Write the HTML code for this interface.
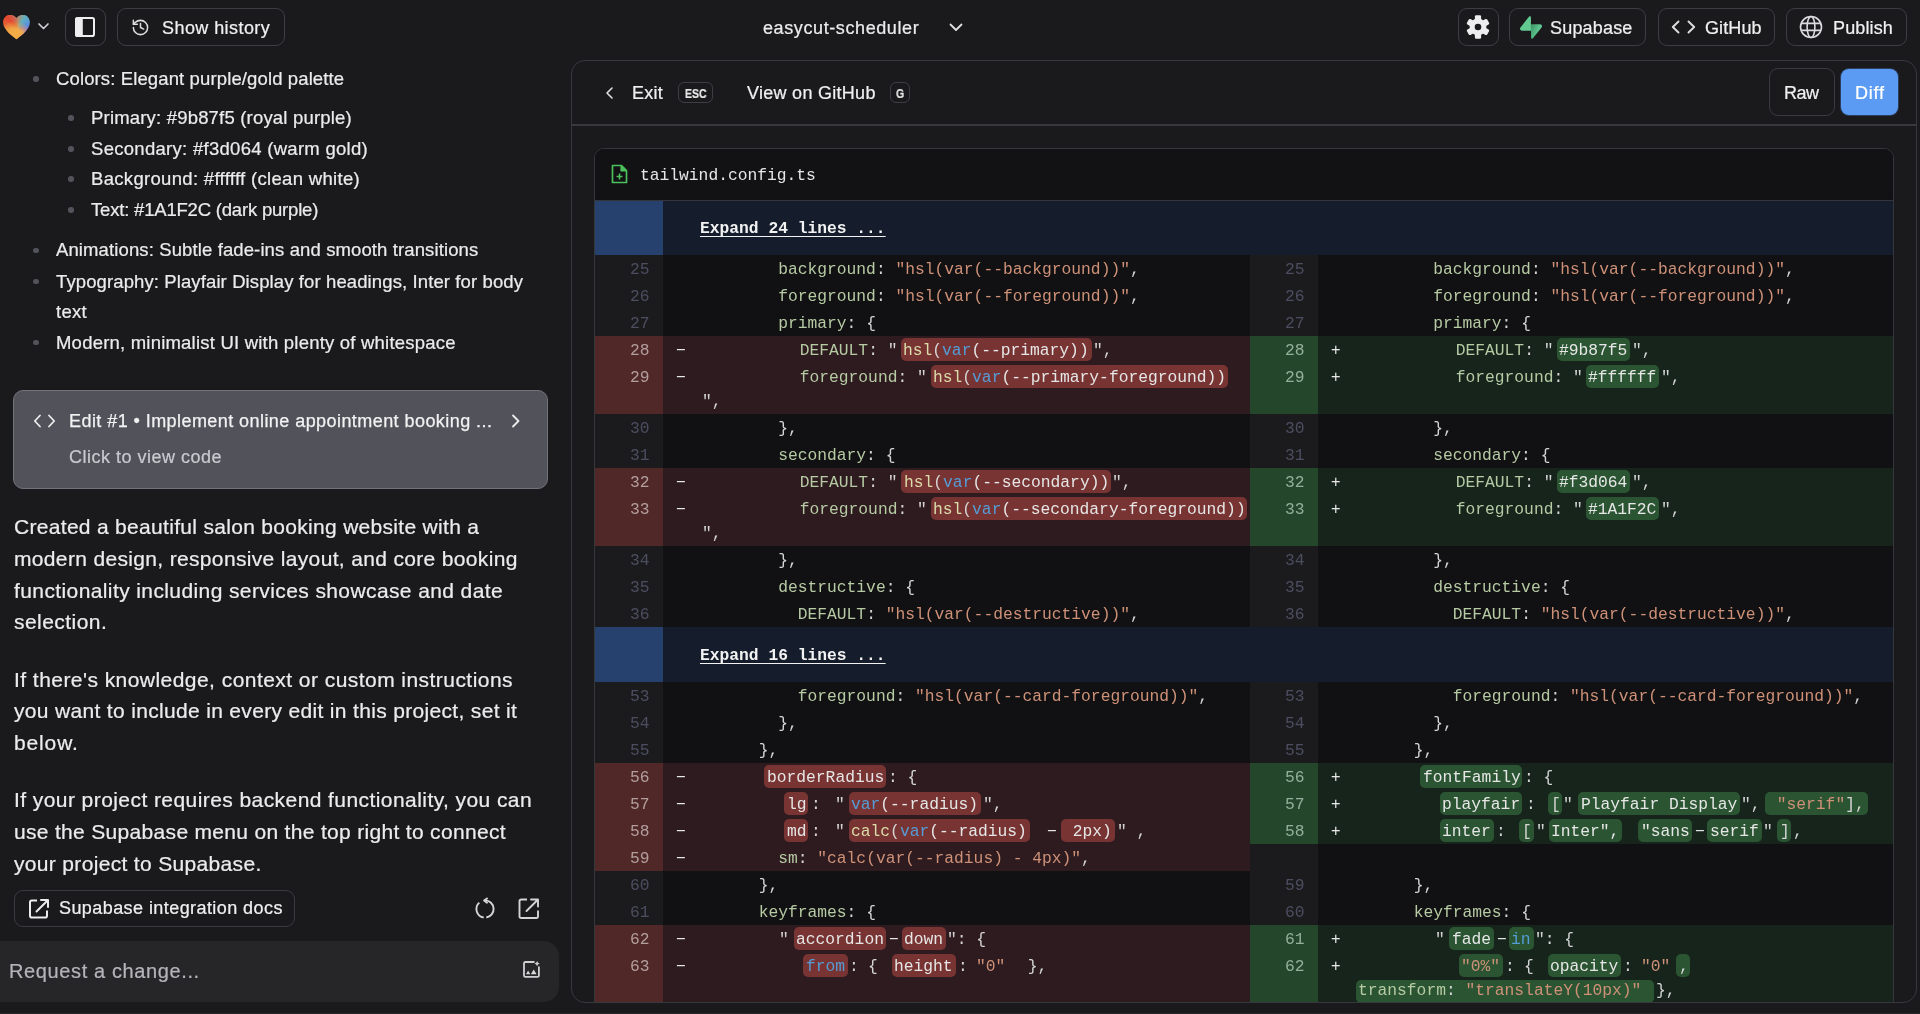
<!DOCTYPE html><html><head><meta charset="utf-8"><style>
html,body{margin:0;padding:0;width:1920px;height:1014px;overflow:hidden;background:#1a1a1d;}
.t{position:absolute;white-space:pre;will-change:transform;}
.r{position:absolute;}
svg{position:absolute;overflow:visible;}
</style></head><body>
<div class="r" style="left:2.5px;top:14.5px;width:28px;height:25px;clip-path:path('M14 24.8 C11.5 22.6 0.6 15.6 0.6 8 C0.6 3.6 3.7 0.3 7.6 0.3 C10.4 0.3 12.6 1.8 14 3.6 C15.4 1.8 17.6 0.3 20.4 0.3 C24.3 0.3 27.4 3.6 27.4 8 C27.4 15.6 16.5 22.6 14 24.8 Z');background:radial-gradient(ellipse 60% 55% at 42% 78%, rgba(241,172,70,1) 0%, rgba(241,172,70,0.85) 45%, rgba(241,172,70,0) 100%), conic-gradient(from 0deg at 52% 52%, #b98a6a 0deg, #5fb0c0 35deg, #5a92dc 70deg, #7c72e4 100deg, #d7a0a0 140deg, #f2ae48 180deg, #f0a244 225deg, #e8703a 270deg, #e4462f 315deg, #c8705a 350deg, #b98a6a 360deg);"></div>
<svg style="left:37.6px;top:23.2px" width="11" height="7" viewBox="0 0 11 7"><path d="M1 1 L5.5 5.5 L10 1" fill="none" stroke="#cfcfd3" stroke-width="1.7" stroke-linecap="round" stroke-linejoin="round"/></svg>
<div class="r" style="left:65px;top:8px;width:40.5px;height:38px;background:transparent;border:1.5px solid #3d3d43;border-radius:9px;box-sizing:border-box;"></div>
<svg style="left:75px;top:17px" width="20" height="20" viewBox="0 0 20 20"><rect x="1" y="1" width="18" height="18" rx="1.8" fill="none" stroke="#eeeef0" stroke-width="2"/><rect x="0.2" y="0.2" width="7.6" height="19.6" rx="1.5" fill="#eeeef0"/></svg>
<div class="r" style="left:116.5px;top:8px;width:168.5px;height:38px;background:transparent;border:1.5px solid #3d3d43;border-radius:9px;box-sizing:border-box;"></div>
<svg style="left:131px;top:17.5px" width="19" height="19" viewBox="0 0 24 24"><path d="M3 12a9 9 0 1 0 9-9 9.75 9.75 0 0 0-6.74 2.74L3 8" fill="none" stroke="#dedee0" stroke-width="1.9" stroke-linecap="round" stroke-linejoin="round"/><path d="M3 3v5h5" fill="none" stroke="#dedee0" stroke-width="1.9" stroke-linecap="round" stroke-linejoin="round"/><path d="M12 7v5l4 2" fill="none" stroke="#dedee0" stroke-width="1.9" stroke-linecap="round" stroke-linejoin="round"/></svg>
<div class="t" style="left:162.00px;top:15.06px;font:400 18px/27px 'Liberation Sans', sans-serif;color:#f0f0f0;letter-spacing:0.43px;-webkit-text-stroke:0.22px currentColor;">Show history</div>
<div class="t" style="left:762.50px;top:14.56px;font:400 18px/27px 'Liberation Sans', sans-serif;color:#ececec;letter-spacing:0.6px;-webkit-text-stroke:0.22px currentColor;">easycut-scheduler</div>
<svg style="left:949px;top:22.5px" width="14" height="9" viewBox="0 0 14 9"><path d="M1.5 1.5 L7 7 L12.5 1.5" fill="none" stroke="#e0e0e0" stroke-width="1.8" stroke-linecap="round" stroke-linejoin="round"/></svg>
<div class="r" style="left:1458px;top:8px;width:40.5px;height:38px;background:transparent;border:1.5px solid #3d3d43;border-radius:9px;box-sizing:border-box;"></div>
<svg style="left:1466px;top:15px" width="24" height="24" viewBox="-12 -12 24 24"><defs><mask id="gm"><g fill="#fff"><circle r="8.4"/><rect x="-3.1" y="-11.7" width="6.2" height="6" rx="1.3" transform="rotate(0)"/><rect x="-3.1" y="-11.7" width="6.2" height="6" rx="1.3" transform="rotate(60)"/><rect x="-3.1" y="-11.7" width="6.2" height="6" rx="1.3" transform="rotate(120)"/><rect x="-3.1" y="-11.7" width="6.2" height="6" rx="1.3" transform="rotate(180)"/><rect x="-3.1" y="-11.7" width="6.2" height="6" rx="1.3" transform="rotate(240)"/><rect x="-3.1" y="-11.7" width="6.2" height="6" rx="1.3" transform="rotate(300)"/></g><circle r="3.3" fill="#000"/></mask></defs><rect x="-12" y="-12" width="24" height="24" fill="#ededf0" mask="url(#gm)"/></svg>
<div class="r" style="left:1509px;top:8px;width:137px;height:38px;background:transparent;border:1.5px solid #3d3d43;border-radius:9px;box-sizing:border-box;"></div>
<svg style="left:1520px;top:16px" width="22" height="23" viewBox="0 0 109 113"><defs><linearGradient id="sb1" x1="53.97" y1="54.97" x2="94.16" y2="71.83" gradientUnits="userSpaceOnUse"><stop offset="0" stop-color="#3f9a68"/><stop offset="1" stop-color="#62c993"/></linearGradient></defs>
<path d="M63.7 110.3c-2.86 3.6-8.66 1.63-8.73-2.97l-1-67.3h45.22c8.19 0 12.76 9.46 7.67 15.88L63.7 110.3z" fill="url(#sb1)"/>
<path d="M45.32 2.07c2.86-3.6 8.66-1.63 8.73 2.97l.44 67.3H9.83c-8.19 0-12.76-9.46-7.67-15.88L45.32 2.07z" fill="#62ca90"/></svg>
<div class="t" style="left:1550.00px;top:15.06px;font:400 18px/27px 'Liberation Sans', sans-serif;color:#f0f0f0;letter-spacing:0.18px;-webkit-text-stroke:0.22px currentColor;">Supabase</div>
<div class="r" style="left:1657.5px;top:8px;width:117.0px;height:38px;background:transparent;border:1.5px solid #3d3d43;border-radius:9px;box-sizing:border-box;"></div>
<svg style="left:1670.8px;top:20.2px" width="25" height="14" viewBox="0 0 25 14"><path d="M7.5 1.5 L1.8 7 L7.5 12.5 M17.5 1.5 L23.2 7 L17.5 12.5" fill="none" stroke="#dedee1" stroke-width="1.9" stroke-linecap="round" stroke-linejoin="round"/></svg>
<div class="t" style="left:1704.50px;top:15.06px;font:400 18px/27px 'Liberation Sans', sans-serif;color:#f0f0f0;letter-spacing:0.12px;-webkit-text-stroke:0.22px currentColor;">GitHub</div>
<div class="r" style="left:1786px;top:8px;width:120.5px;height:38px;background:transparent;border:1.5px solid #3d3d43;border-radius:9px;box-sizing:border-box;"></div>
<svg style="left:1799.1px;top:15px" width="24" height="24" viewBox="0 0 24 24"><g fill="none" stroke="#dcdce0" stroke-width="1.6"><circle cx="12" cy="12" r="10.5"/><path d="M2.2 8.4 H21.8 M2.2 15.4 H21.8"/><ellipse cx="12" cy="12" rx="3.9" ry="10.5"/></g></svg>
<div class="t" style="left:1832.50px;top:15.06px;font:400 18px/27px 'Liberation Sans', sans-serif;color:#f0f0f0;letter-spacing:0.14px;-webkit-text-stroke:0.22px currentColor;">Publish</div>
<div class="r" style="left:33.2px;top:76.2px;width:5.6px;height:5.6px;border-radius:50%;background:#53535b"></div>
<div class="t" style="left:55.60px;top:64.99px;font:400 18.5px/28px 'Liberation Sans', sans-serif;color:#ebebeb;letter-spacing:0.125px;-webkit-text-stroke:0.22px currentColor;">Colors: Elegant purple/gold palette</div>
<div class="r" style="left:68.2px;top:115.4px;width:5.6px;height:5.6px;border-radius:50%;background:#53535b"></div>
<div class="t" style="left:90.90px;top:104.39px;font:400 18.5px/28px 'Liberation Sans', sans-serif;color:#ebebeb;letter-spacing:0.189px;-webkit-text-stroke:0.22px currentColor;">Primary: #9b87f5 (royal purple)</div>
<div class="r" style="left:68.2px;top:146.3px;width:5.6px;height:5.6px;border-radius:50%;background:#53535b"></div>
<div class="t" style="left:90.90px;top:135.29px;font:400 18.5px/28px 'Liberation Sans', sans-serif;color:#ebebeb;letter-spacing:0.288px;-webkit-text-stroke:0.22px currentColor;">Secondary: #f3d064 (warm gold)</div>
<div class="r" style="left:68.2px;top:176.3px;width:5.6px;height:5.6px;border-radius:50%;background:#53535b"></div>
<div class="t" style="left:90.90px;top:165.29px;font:400 18.5px/28px 'Liberation Sans', sans-serif;color:#ebebeb;letter-spacing:0.321px;-webkit-text-stroke:0.22px currentColor;">Background: #ffffff (clean white)</div>
<div class="r" style="left:68.2px;top:207.3px;width:5.6px;height:5.6px;border-radius:50%;background:#53535b"></div>
<div class="t" style="left:90.90px;top:196.29px;font:400 18.5px/28px 'Liberation Sans', sans-serif;color:#ebebeb;letter-spacing:-0.193px;-webkit-text-stroke:0.22px currentColor;">Text: #1A1F2C (dark purple)</div>
<div class="r" style="left:33.2px;top:247.5px;width:5.6px;height:5.6px;border-radius:50%;background:#53535b"></div>
<div class="t" style="left:55.70px;top:236.49px;font:400 18.5px/28px 'Liberation Sans', sans-serif;color:#ebebeb;letter-spacing:0.118px;-webkit-text-stroke:0.22px currentColor;">Animations: Subtle fade-ins and smooth transitions</div>
<div class="r" style="left:33.2px;top:278.6px;width:5.6px;height:5.6px;border-radius:50%;background:#53535b"></div>
<div class="t" style="left:55.70px;top:267.59px;font:400 18.5px/28px 'Liberation Sans', sans-serif;color:#ebebeb;letter-spacing:0.112px;-webkit-text-stroke:0.22px currentColor;">Typography: Playfair Display for headings, Inter for body</div>
<div class="t" style="left:55.70px;top:297.79px;font:400 18.5px/28px 'Liberation Sans', sans-serif;color:#ebebeb;letter-spacing:0.240px;-webkit-text-stroke:0.22px currentColor;">text</div>
<div class="r" style="left:33.2px;top:339.7px;width:5.6px;height:5.6px;border-radius:50%;background:#53535b"></div>
<div class="t" style="left:55.70px;top:328.69px;font:400 18.5px/28px 'Liberation Sans', sans-serif;color:#ebebeb;letter-spacing:0.213px;-webkit-text-stroke:0.22px currentColor;">Modern, minimalist UI with plenty of whitespace</div>
<div class="r" style="left:13px;top:389.5px;width:535px;height:99.80000000000001px;background:#52525b;border:1.5px solid #72727a;border-radius:10px;box-sizing:border-box;"></div>
<svg style="left:33px;top:413.5px" width="23" height="14" viewBox="0 0 23 14"><path d="M7 1.5 L1.8 7 L7 12.5 M16 1.5 L21.2 7 L16 12.5" fill="none" stroke="#ececec" stroke-width="1.8" stroke-linecap="round" stroke-linejoin="round"/></svg>
<div class="t" style="left:69.10px;top:408.36px;font:400 18px/27px 'Liberation Sans', sans-serif;color:#f2f2f2;letter-spacing:0.436px;-webkit-text-stroke:0.25px #f2f2f2;">Edit #1 • Implement online appointment booking ...</div>
<svg style="left:511px;top:413.5px" width="10" height="14" viewBox="0 0 10 14"><path d="M2 1.5 L7.5 7 L2 12.5" fill="none" stroke="#ececec" stroke-width="1.8" stroke-linecap="round" stroke-linejoin="round"/></svg>
<div class="t" style="left:69.10px;top:443.86px;font:400 18px/27px 'Liberation Sans', sans-serif;color:#c9c9ce;letter-spacing:0.498px;-webkit-text-stroke:0.22px currentColor;">Click to view code</div>
<div class="t" style="left:14.00px;top:511.02px;font:400 21px/32px 'Liberation Sans', sans-serif;color:#ececec;letter-spacing:0.306px;-webkit-text-stroke:0.22px currentColor;">Created a beautiful salon booking website with a</div>
<div class="t" style="left:14.00px;top:543.12px;font:400 21px/32px 'Liberation Sans', sans-serif;color:#ececec;letter-spacing:0.338px;-webkit-text-stroke:0.22px currentColor;">modern design, responsive layout, and core booking</div>
<div class="t" style="left:14.00px;top:574.62px;font:400 21px/32px 'Liberation Sans', sans-serif;color:#ececec;letter-spacing:0.396px;-webkit-text-stroke:0.22px currentColor;">functionality including services showcase and date</div>
<div class="t" style="left:14.00px;top:605.82px;font:400 21px/32px 'Liberation Sans', sans-serif;color:#ececec;letter-spacing:0.458px;-webkit-text-stroke:0.22px currentColor;">selection.</div>
<div class="t" style="left:14.00px;top:663.52px;font:400 21px/32px 'Liberation Sans', sans-serif;color:#ececec;letter-spacing:0.450px;-webkit-text-stroke:0.22px currentColor;">If there's knowledge, context or custom instructions</div>
<div class="t" style="left:14.00px;top:694.72px;font:400 21px/32px 'Liberation Sans', sans-serif;color:#ececec;letter-spacing:0.329px;-webkit-text-stroke:0.22px currentColor;">you want to include in every edit in this project, set it</div>
<div class="t" style="left:14.00px;top:726.52px;font:400 21px/32px 'Liberation Sans', sans-serif;color:#ececec;letter-spacing:0.858px;-webkit-text-stroke:0.22px currentColor;">below.</div>
<div class="t" style="left:14.00px;top:784.42px;font:400 21px/32px 'Liberation Sans', sans-serif;color:#ececec;letter-spacing:0.428px;-webkit-text-stroke:0.22px currentColor;">If your project requires backend functionality, you can</div>
<div class="t" style="left:14.00px;top:815.62px;font:400 21px/32px 'Liberation Sans', sans-serif;color:#ececec;letter-spacing:0.317px;-webkit-text-stroke:0.22px currentColor;">use the Supabase menu on the top right to connect</div>
<div class="t" style="left:14.00px;top:847.52px;font:400 21px/32px 'Liberation Sans', sans-serif;color:#ececec;letter-spacing:0.330px;-webkit-text-stroke:0.22px currentColor;">your project to Supabase.</div>
<div class="r" style="left:14px;top:889.5px;width:280.5px;height:37.0px;background:transparent;border:1px solid #3a3b40;border-radius:9px;box-sizing:border-box;"></div>
<svg style="left:28px;top:897.5px" width="22" height="22" viewBox="0 0 22 22"><path d="M9 2.5 H3.8 Q2 2.5 2 4.3 V17.7 Q2 19.5 3.8 19.5 H17.2 Q19 19.5 19 17.7 V12.5" fill="none" stroke="#ececec" stroke-width="2" stroke-linejoin="round"/><path d="M13 2 H20 V9 M20 2 L8.5 13.5" fill="none" stroke="#ececec" stroke-width="2" stroke-linecap="round" stroke-linejoin="round"/></svg>
<div class="t" style="left:58.60px;top:894.66px;font:400 18px/27px 'Liberation Sans', sans-serif;color:#f0f0f0;letter-spacing:0.427px;-webkit-text-stroke:0.22px currentColor;">Supabase integration docs</div>
<svg style="left:475.3px;top:899px" width="20" height="20" viewBox="0 0 20 20"><path d="M10.2 1.4 A8.6 8.6 0 0 1 11.3 18.5 M8.7 18.5 A8.6 8.6 0 0 1 4.3 3.6" fill="none" stroke="#d6d6d8" stroke-width="1.9" stroke-linecap="butt"/><path d="M12 -0.6 L9.1 1.6 L12 3.8" fill="none" stroke="#d6d6d8" stroke-width="1.9" stroke-linecap="round" stroke-linejoin="round"/></svg>
<svg style="left:518px;top:897.7px" width="22" height="22" viewBox="0 0 22 22"><path d="M9 1.5 H3.3 Q1.5 1.5 1.5 3.3 V18.2 Q1.5 20 3.3 20 H18.2 Q20 20 20 18.2 V12.5" fill="none" stroke="#d4d4d4" stroke-width="1.9" stroke-linejoin="round"/><path d="M13 1.5 H20 V8.5 M20 1.5 L8.5 13" fill="none" stroke="#d4d4d4" stroke-width="1.9" stroke-linecap="round" stroke-linejoin="round"/></svg>
<div class="r" style="left:-20px;top:941px;width:578.5px;height:61px;background:#262629;border-radius:15px;box-sizing:border-box;"></div>
<div class="t" style="left:9.00px;top:954.87px;font:400 20px/32px 'Liberation Sans', sans-serif;color:#b4b4b9;letter-spacing:0.619px;-webkit-text-stroke:0.22px currentColor;">Request a change...</div>
<svg style="left:522px;top:960px" width="19" height="19" viewBox="0 0 19 19"><path d="M11.9 2 H3.4 Q2 2 2 3.4 V15.4 Q2 16.8 3.4 16.8 H15.5 Q16.9 16.8 16.9 15.4 V7.2" fill="none" stroke="#d0d0d3" stroke-width="1.8" stroke-linecap="round"/><path d="M4 14.2 L6.1 10.5 L8.2 14.2 Z M8.8 14.2 L11.7 9.4 L14.6 14.2 Z" fill="#d8d8da"/><path d="M15.1 1 Q15.6 3.1 17.7 3.6 Q15.6 4.1 15.1 6.2 Q14.6 4.1 12.5 3.6 Q14.6 3.1 15.1 1 Z" fill="#d0d0d3"/></svg>
<div class="r" style="left:0px;top:1012.6px;width:1920px;height:1.3999999999999773px;background:#27272a;border-radius:0px;box-sizing:border-box;"></div>
<div class="r" style="left:570.5px;top:59.5px;width:1346.5px;height:943.3px;border:1.5px solid #38393e;border-radius:14px;box-sizing:border-box;background:#1a1a1d;overflow:hidden;" id="panel">
<div class="r" style="left:-1px;top:63.5px;width:1346px;height:1.5px;background:#38393e;border-radius:0px;box-sizing:border-box;"></div>
<svg style="left:33px;top:26px" width="9" height="12" viewBox="0 0 9 12"><path d="M7 1 L2 6 L7 11" fill="none" stroke="#e0e0e0" stroke-width="1.6" stroke-linecap="round" stroke-linejoin="round"/></svg>
<div class="t" style="left:60.00px;top:19.36px;font:400 18px/27px 'Liberation Sans', sans-serif;color:#f0f0f0;letter-spacing:0.232px;-webkit-text-stroke:0.22px currentColor;">Exit</div>
<div class="r" style="left:106.5px;top:21.5px;width:35.0px;height:20.5px;background:transparent;border:1.5px solid #3d3e44;border-radius:6px;box-sizing:border-box;"></div>
<div class="t" style="left:113.30px;top:24.13px;font:700 13.2px/17px 'Liberation Sans', sans-serif;color:#e8e8e8;letter-spacing:0px;transform:scaleX(0.8);transform-origin:0 0;-webkit-text-stroke:0.22px currentColor;">ESC</div>
<div class="t" style="left:175.20px;top:19.36px;font:400 18px/27px 'Liberation Sans', sans-serif;color:#f0f0f0;letter-spacing:0.283px;-webkit-text-stroke:0.22px currentColor;">View on GitHub</div>
<div class="r" style="left:318px;top:21.5px;width:20.5px;height:20.5px;background:transparent;border:1.5px solid #3d3e44;border-radius:6px;box-sizing:border-box;"></div>
<div class="t" style="left:324.80px;top:24.13px;font:700 13.2px/17px 'Liberation Sans', sans-serif;color:#e8e8e8;letter-spacing:0px;transform:scaleX(0.8);transform-origin:0 0;-webkit-text-stroke:0.22px currentColor;">G</div>
<div class="r" style="left:1197.5px;top:7.5px;width:65.5px;height:48.0px;background:transparent;border:1.5px solid #3a3b40;border-radius:9px;box-sizing:border-box;"></div>
<div class="t" style="left:1212.50px;top:19.36px;font:400 18px/27px 'Liberation Sans', sans-serif;color:#f0f0f0;letter-spacing:-0.505px;-webkit-text-stroke:0.22px currentColor;">Raw</div>
<div class="r" style="left:1269.5px;top:8.5px;width:57.0px;height:46.0px;background:#5b9bf3;border-radius:8px;box-sizing:border-box;box-shadow:0 0 0 1px #2b3f5c;"></div>
<div class="t" style="left:1283.70px;top:19.36px;font:400 18px/27px 'Liberation Sans', sans-serif;color:#ffffff;letter-spacing:0.742px;-webkit-text-stroke:0.22px currentColor;">Diff</div>
<div class="r" style="left:22px;top:87px;width:1300.5px;height:952px;background:#111113;border:1.5px solid #36373d;border-radius:10px;box-sizing:border-box;"></div>
<div class="r" style="left:23px;top:88px;width:1298px;height:51px;background:#121214;border-radius:9px;box-sizing:border-box;"></div>
<div class="r" style="left:23px;top:139px;width:1298px;height:1px;background:#33343c;border-radius:0px;box-sizing:border-box;"></div>
<svg style="left:39px;top:103.5px" width="17" height="20" viewBox="0 0 17 20"><path d="M1.5 1.5 H10.5 L15.5 6.5 V18.5 H1.5 Z" fill="none" stroke="#4cc05c" stroke-width="1.7" stroke-linejoin="round"/><path d="M10 1.5 V7 H15.5" fill="#4cc05c" stroke="#4cc05c" stroke-width="1.2" stroke-linejoin="round"/><path d="M8.5 9.5 V15.5 M5.5 12.5 H11.5" stroke="#4cc05c" stroke-width="1.6"/></svg>
<div class="t" style="left:68.50px;top:101.16px;font:400 16.3px/27px 'Liberation Mono', monospace;color:#e6e6e6;letter-spacing:0px;">tailwind.config.ts</div>
<div class="r" style="left:23px;top:140px;width:68px;height:54px;background:#27416f;border-radius:0px;box-sizing:border-box;"></div>
<div class="r" style="left:91px;top:140px;width:1230px;height:54px;background:#151c2c;border-radius:0px;box-sizing:border-box;"></div>
<div class="t" style="left:128.00px;top:154.66px;font:700 16.3px/27px 'Liberation Mono', monospace;color:#f2f2f2;letter-spacing:0px;text-decoration:underline;text-underline-offset:2.5px;text-decoration-thickness:1.2px;">Expand 24 lines ...</div>
<div class="r" style="left:23px;top:194px;width:68px;height:27px;background:#1b1b1e;border-radius:0px;box-sizing:border-box;"></div>
<div class="r" style="left:91px;top:194px;width:587px;height:27px;background:#111113;border-radius:0px;box-sizing:border-box;"></div>
<div class="t" style="left:58.04px;top:195.56px;font:400 16.3px/27px 'Liberation Mono', monospace;color:#d4d4d4;letter-spacing:0px;"><span style="color:#4c4d5f">25</span></div>
<div class="t" style="left:128.00px;top:195.56px;font:400 16.3px/27px 'Liberation Mono', monospace;color:#d4d4d4;letter-spacing:0px;">        <span style="color:#b6caa3">background</span><span style="color:#d4d4d4">:</span> <span style="color:#ce9178">"hsl(var(--background))"</span><span style="color:#d4d4d4">,</span></div>
<div class="r" style="left:678px;top:194px;width:68px;height:27px;background:#1b1b1e;border-radius:0px;box-sizing:border-box;"></div>
<div class="r" style="left:746px;top:194px;width:575px;height:27px;background:#111113;border-radius:0px;box-sizing:border-box;"></div>
<div class="t" style="left:713.04px;top:195.56px;font:400 16.3px/27px 'Liberation Mono', monospace;color:#d4d4d4;letter-spacing:0px;"><span style="color:#4c4d5f">25</span></div>
<div class="t" style="left:783.50px;top:195.56px;font:400 16.3px/27px 'Liberation Mono', monospace;color:#d4d4d4;letter-spacing:0px;">        <span style="color:#b6caa3">background</span><span style="color:#d4d4d4">:</span> <span style="color:#ce9178">"hsl(var(--background))"</span><span style="color:#d4d4d4">,</span></div>
<div class="r" style="left:23px;top:221px;width:68px;height:27px;background:#1b1b1e;border-radius:0px;box-sizing:border-box;"></div>
<div class="r" style="left:91px;top:221px;width:587px;height:27px;background:#111113;border-radius:0px;box-sizing:border-box;"></div>
<div class="t" style="left:58.04px;top:222.56px;font:400 16.3px/27px 'Liberation Mono', monospace;color:#d4d4d4;letter-spacing:0px;"><span style="color:#4c4d5f">26</span></div>
<div class="t" style="left:128.00px;top:222.56px;font:400 16.3px/27px 'Liberation Mono', monospace;color:#d4d4d4;letter-spacing:0px;">        <span style="color:#b6caa3">foreground</span><span style="color:#d4d4d4">:</span> <span style="color:#ce9178">"hsl(var(--foreground))"</span><span style="color:#d4d4d4">,</span></div>
<div class="r" style="left:678px;top:221px;width:68px;height:27px;background:#1b1b1e;border-radius:0px;box-sizing:border-box;"></div>
<div class="r" style="left:746px;top:221px;width:575px;height:27px;background:#111113;border-radius:0px;box-sizing:border-box;"></div>
<div class="t" style="left:713.04px;top:222.56px;font:400 16.3px/27px 'Liberation Mono', monospace;color:#d4d4d4;letter-spacing:0px;"><span style="color:#4c4d5f">26</span></div>
<div class="t" style="left:783.50px;top:222.56px;font:400 16.3px/27px 'Liberation Mono', monospace;color:#d4d4d4;letter-spacing:0px;">        <span style="color:#b6caa3">foreground</span><span style="color:#d4d4d4">:</span> <span style="color:#ce9178">"hsl(var(--foreground))"</span><span style="color:#d4d4d4">,</span></div>
<div class="r" style="left:23px;top:248px;width:68px;height:27px;background:#1b1b1e;border-radius:0px;box-sizing:border-box;"></div>
<div class="r" style="left:91px;top:248px;width:587px;height:27px;background:#111113;border-radius:0px;box-sizing:border-box;"></div>
<div class="t" style="left:58.04px;top:249.56px;font:400 16.3px/27px 'Liberation Mono', monospace;color:#d4d4d4;letter-spacing:0px;"><span style="color:#4c4d5f">27</span></div>
<div class="t" style="left:128.00px;top:249.56px;font:400 16.3px/27px 'Liberation Mono', monospace;color:#d4d4d4;letter-spacing:0px;">        <span style="color:#b6caa3">primary</span><span style="color:#d4d4d4">:</span> <span style="color:#d4d4d4">{</span></div>
<div class="r" style="left:678px;top:248px;width:68px;height:27px;background:#1b1b1e;border-radius:0px;box-sizing:border-box;"></div>
<div class="r" style="left:746px;top:248px;width:575px;height:27px;background:#111113;border-radius:0px;box-sizing:border-box;"></div>
<div class="t" style="left:713.04px;top:249.56px;font:400 16.3px/27px 'Liberation Mono', monospace;color:#d4d4d4;letter-spacing:0px;"><span style="color:#4c4d5f">27</span></div>
<div class="t" style="left:783.50px;top:249.56px;font:400 16.3px/27px 'Liberation Mono', monospace;color:#d4d4d4;letter-spacing:0px;">        <span style="color:#b6caa3">primary</span><span style="color:#d4d4d4">:</span> <span style="color:#d4d4d4">{</span></div>
<div class="r" style="left:23px;top:275px;width:68px;height:27px;background:#512828;border-radius:0px;box-sizing:border-box;"></div>
<div class="r" style="left:91px;top:275px;width:587px;height:27px;background:#2e1b1f;border-radius:0px;box-sizing:border-box;"></div>
<div class="t" style="left:58.04px;top:276.56px;font:400 16.3px/27px 'Liberation Mono', monospace;color:#d4d4d4;letter-spacing:0px;"><span style="color:#b39e9e">28</span></div>
<div class="t" style="left:104.00px;top:275.36px;font:400 16.3px/27px 'Liberation Mono', monospace;color:#d4d4d4;letter-spacing:0px;"><span style="color:#e8e8e8;font-family:'Liberation Sans'">−</span></div>
<div class="r" style="left:678px;top:275px;width:68px;height:27px;background:#24472c;border-radius:0px;box-sizing:border-box;"></div>
<div class="r" style="left:746px;top:275px;width:575px;height:27px;background:#16241c;border-radius:0px;box-sizing:border-box;"></div>
<div class="t" style="left:713.04px;top:276.56px;font:400 16.3px/27px 'Liberation Mono', monospace;color:#d4d4d4;letter-spacing:0px;"><span style="color:#94b09a">28</span></div>
<div class="t" style="left:759.80px;top:275.36px;font:400 16.3px/27px 'Liberation Mono', monospace;color:#d4d4d4;letter-spacing:0px;"><span style="color:#e8e8e8;font-family:'Liberation Sans'">+</span></div>
<div class="r" style="left:23px;top:302px;width:68px;height:51px;background:#512828;border-radius:0px;box-sizing:border-box;"></div>
<div class="r" style="left:91px;top:302px;width:587px;height:51px;background:#2e1b1f;border-radius:0px;box-sizing:border-box;"></div>
<div class="t" style="left:58.04px;top:303.56px;font:400 16.3px/27px 'Liberation Mono', monospace;color:#d4d4d4;letter-spacing:0px;"><span style="color:#b39e9e">29</span></div>
<div class="t" style="left:104.00px;top:302.36px;font:400 16.3px/27px 'Liberation Mono', monospace;color:#d4d4d4;letter-spacing:0px;"><span style="color:#e8e8e8;font-family:'Liberation Sans'">−</span></div>
<div class="r" style="left:678px;top:302px;width:68px;height:51px;background:#24472c;border-radius:0px;box-sizing:border-box;"></div>
<div class="r" style="left:746px;top:302px;width:575px;height:51px;background:#16241c;border-radius:0px;box-sizing:border-box;"></div>
<div class="t" style="left:713.04px;top:303.56px;font:400 16.3px/27px 'Liberation Mono', monospace;color:#d4d4d4;letter-spacing:0px;"><span style="color:#94b09a">29</span></div>
<div class="t" style="left:759.80px;top:302.36px;font:400 16.3px/27px 'Liberation Mono', monospace;color:#d4d4d4;letter-spacing:0px;"><span style="color:#e8e8e8;font-family:'Liberation Sans'">+</span></div>
<div class="t" style="left:130.50px;top:276.56px;font:400 16.3px/27px 'Liberation Mono', monospace;color:#d4d4d4;letter-spacing:0px;"><span style="color:#d4d4d4">          <span style="color:#b6caa3">DEFAULT</span><span style="color:#d4d4d4">: "</span></span></div>
<div class="r" style="left:329px;top:277px;width:191.5px;height:23.5px;background:#773433;border-radius:5px;box-sizing:border-box;"></div>
<div class="t" style="left:331.50px;top:276.56px;font:400 16.3px/27px 'Liberation Mono', monospace;color:#d4d4d4;letter-spacing:0px;"><span style="color:#d4d4d4"><span style="color:#dcdcaa">hsl</span><span style="color:#d4d4d4">(</span><span style="color:#569cd6">var</span><span style="color:#e6e6e6">(--primary))</span></span></div>
<div class="t" style="left:521.50px;top:276.56px;font:400 16.3px/27px 'Liberation Mono', monospace;color:#d4d4d4;letter-spacing:0px;"><span style="color:#d4d4d4"><span style="color:#d4d4d4">",</span></span></div>
<div class="t" style="left:130.50px;top:303.56px;font:400 16.3px/27px 'Liberation Mono', monospace;color:#d4d4d4;letter-spacing:0px;"><span style="color:#d4d4d4">          <span style="color:#b6caa3">foreground</span><span style="color:#d4d4d4">: "</span></span></div>
<div class="r" style="left:359px;top:304px;width:297.5px;height:23.5px;background:#773433;border-radius:5px;box-sizing:border-box;"></div>
<div class="t" style="left:361.50px;top:303.56px;font:400 16.3px/27px 'Liberation Mono', monospace;color:#d4d4d4;letter-spacing:0px;"><span style="color:#d4d4d4"><span style="color:#dcdcaa">hsl</span><span style="color:#d4d4d4">(</span><span style="color:#569cd6">var</span><span style="color:#e6e6e6">(--primary-foreground))</span></span></div>
<div class="t" style="left:130.50px;top:327.56px;font:400 16.3px/27px 'Liberation Mono', monospace;color:#d4d4d4;letter-spacing:0px;"><span style="color:#d4d4d4"><span style="color:#d4d4d4">",</span></span></div>
<div class="t" style="left:786.00px;top:276.56px;font:400 16.3px/27px 'Liberation Mono', monospace;color:#d4d4d4;letter-spacing:0px;"><span style="color:#d4d4d4">          <span style="color:#b6caa3">DEFAULT</span><span style="color:#d4d4d4">: "</span></span></div>
<div class="r" style="left:985px;top:277px;width:73.5px;height:23.5px;background:#2b5532;border-radius:5px;box-sizing:border-box;"></div>
<div class="t" style="left:987.50px;top:276.56px;font:400 16.3px/27px 'Liberation Mono', monospace;color:#d4d4d4;letter-spacing:0px;"><span style="color:#d4d4d4"><span style="color:#e6e6e6">#9b87f5</span></span></div>
<div class="t" style="left:1060.00px;top:276.56px;font:400 16.3px/27px 'Liberation Mono', monospace;color:#d4d4d4;letter-spacing:0px;"><span style="color:#d4d4d4"><span style="color:#d4d4d4">",</span></span></div>
<div class="t" style="left:786.00px;top:303.56px;font:400 16.3px/27px 'Liberation Mono', monospace;color:#d4d4d4;letter-spacing:0px;"><span style="color:#d4d4d4">          <span style="color:#b6caa3">foreground</span><span style="color:#d4d4d4">: "</span></span></div>
<div class="r" style="left:1014px;top:304px;width:73.5px;height:23.5px;background:#2b5532;border-radius:5px;box-sizing:border-box;"></div>
<div class="t" style="left:1016.50px;top:303.56px;font:400 16.3px/27px 'Liberation Mono', monospace;color:#d4d4d4;letter-spacing:0px;"><span style="color:#d4d4d4"><span style="color:#e6e6e6">#ffffff</span></span></div>
<div class="t" style="left:1089.00px;top:303.56px;font:400 16.3px/27px 'Liberation Mono', monospace;color:#d4d4d4;letter-spacing:0px;"><span style="color:#d4d4d4"><span style="color:#d4d4d4">",</span></span></div>
<div class="r" style="left:23px;top:353px;width:68px;height:27px;background:#1b1b1e;border-radius:0px;box-sizing:border-box;"></div>
<div class="r" style="left:91px;top:353px;width:587px;height:27px;background:#111113;border-radius:0px;box-sizing:border-box;"></div>
<div class="t" style="left:58.04px;top:354.56px;font:400 16.3px/27px 'Liberation Mono', monospace;color:#d4d4d4;letter-spacing:0px;"><span style="color:#4c4d5f">30</span></div>
<div class="t" style="left:128.00px;top:354.56px;font:400 16.3px/27px 'Liberation Mono', monospace;color:#d4d4d4;letter-spacing:0px;">        <span style="color:#d4d4d4">}</span><span style="color:#d4d4d4">,</span></div>
<div class="r" style="left:678px;top:353px;width:68px;height:27px;background:#1b1b1e;border-radius:0px;box-sizing:border-box;"></div>
<div class="r" style="left:746px;top:353px;width:575px;height:27px;background:#111113;border-radius:0px;box-sizing:border-box;"></div>
<div class="t" style="left:713.04px;top:354.56px;font:400 16.3px/27px 'Liberation Mono', monospace;color:#d4d4d4;letter-spacing:0px;"><span style="color:#4c4d5f">30</span></div>
<div class="t" style="left:783.50px;top:354.56px;font:400 16.3px/27px 'Liberation Mono', monospace;color:#d4d4d4;letter-spacing:0px;">        <span style="color:#d4d4d4">}</span><span style="color:#d4d4d4">,</span></div>
<div class="r" style="left:23px;top:380px;width:68px;height:27px;background:#1b1b1e;border-radius:0px;box-sizing:border-box;"></div>
<div class="r" style="left:91px;top:380px;width:587px;height:27px;background:#111113;border-radius:0px;box-sizing:border-box;"></div>
<div class="t" style="left:58.04px;top:381.56px;font:400 16.3px/27px 'Liberation Mono', monospace;color:#d4d4d4;letter-spacing:0px;"><span style="color:#4c4d5f">31</span></div>
<div class="t" style="left:128.00px;top:381.56px;font:400 16.3px/27px 'Liberation Mono', monospace;color:#d4d4d4;letter-spacing:0px;">        <span style="color:#b6caa3">secondary</span><span style="color:#d4d4d4">:</span> <span style="color:#d4d4d4">{</span></div>
<div class="r" style="left:678px;top:380px;width:68px;height:27px;background:#1b1b1e;border-radius:0px;box-sizing:border-box;"></div>
<div class="r" style="left:746px;top:380px;width:575px;height:27px;background:#111113;border-radius:0px;box-sizing:border-box;"></div>
<div class="t" style="left:713.04px;top:381.56px;font:400 16.3px/27px 'Liberation Mono', monospace;color:#d4d4d4;letter-spacing:0px;"><span style="color:#4c4d5f">31</span></div>
<div class="t" style="left:783.50px;top:381.56px;font:400 16.3px/27px 'Liberation Mono', monospace;color:#d4d4d4;letter-spacing:0px;">        <span style="color:#b6caa3">secondary</span><span style="color:#d4d4d4">:</span> <span style="color:#d4d4d4">{</span></div>
<div class="r" style="left:23px;top:407px;width:68px;height:27px;background:#512828;border-radius:0px;box-sizing:border-box;"></div>
<div class="r" style="left:91px;top:407px;width:587px;height:27px;background:#2e1b1f;border-radius:0px;box-sizing:border-box;"></div>
<div class="t" style="left:58.04px;top:408.56px;font:400 16.3px/27px 'Liberation Mono', monospace;color:#d4d4d4;letter-spacing:0px;"><span style="color:#b39e9e">32</span></div>
<div class="t" style="left:104.00px;top:407.36px;font:400 16.3px/27px 'Liberation Mono', monospace;color:#d4d4d4;letter-spacing:0px;"><span style="color:#e8e8e8;font-family:'Liberation Sans'">−</span></div>
<div class="r" style="left:678px;top:407px;width:68px;height:27px;background:#24472c;border-radius:0px;box-sizing:border-box;"></div>
<div class="r" style="left:746px;top:407px;width:575px;height:27px;background:#16241c;border-radius:0px;box-sizing:border-box;"></div>
<div class="t" style="left:713.04px;top:408.56px;font:400 16.3px/27px 'Liberation Mono', monospace;color:#d4d4d4;letter-spacing:0px;"><span style="color:#94b09a">32</span></div>
<div class="t" style="left:759.80px;top:407.36px;font:400 16.3px/27px 'Liberation Mono', monospace;color:#d4d4d4;letter-spacing:0px;"><span style="color:#e8e8e8;font-family:'Liberation Sans'">+</span></div>
<div class="r" style="left:23px;top:434px;width:68px;height:51px;background:#512828;border-radius:0px;box-sizing:border-box;"></div>
<div class="r" style="left:91px;top:434px;width:587px;height:51px;background:#2e1b1f;border-radius:0px;box-sizing:border-box;"></div>
<div class="t" style="left:58.04px;top:435.56px;font:400 16.3px/27px 'Liberation Mono', monospace;color:#d4d4d4;letter-spacing:0px;"><span style="color:#b39e9e">33</span></div>
<div class="t" style="left:104.00px;top:434.36px;font:400 16.3px/27px 'Liberation Mono', monospace;color:#d4d4d4;letter-spacing:0px;"><span style="color:#e8e8e8;font-family:'Liberation Sans'">−</span></div>
<div class="r" style="left:678px;top:434px;width:68px;height:51px;background:#24472c;border-radius:0px;box-sizing:border-box;"></div>
<div class="r" style="left:746px;top:434px;width:575px;height:51px;background:#16241c;border-radius:0px;box-sizing:border-box;"></div>
<div class="t" style="left:713.04px;top:435.56px;font:400 16.3px/27px 'Liberation Mono', monospace;color:#d4d4d4;letter-spacing:0px;"><span style="color:#94b09a">33</span></div>
<div class="t" style="left:759.80px;top:434.36px;font:400 16.3px/27px 'Liberation Mono', monospace;color:#d4d4d4;letter-spacing:0px;"><span style="color:#e8e8e8;font-family:'Liberation Sans'">+</span></div>
<div class="t" style="left:130.50px;top:408.56px;font:400 16.3px/27px 'Liberation Mono', monospace;color:#d4d4d4;letter-spacing:0px;"><span style="color:#d4d4d4">          <span style="color:#b6caa3">DEFAULT</span><span style="color:#d4d4d4">: "</span></span></div>
<div class="r" style="left:329.5px;top:409px;width:210.0px;height:23.5px;background:#773433;border-radius:5px;box-sizing:border-box;"></div>
<div class="t" style="left:332.00px;top:408.56px;font:400 16.3px/27px 'Liberation Mono', monospace;color:#d4d4d4;letter-spacing:0px;"><span style="color:#d4d4d4"><span style="color:#dcdcaa">hsl</span><span style="color:#d4d4d4">(</span><span style="color:#569cd6">var</span><span style="color:#e6e6e6">(--secondary))</span></span></div>
<div class="t" style="left:540.50px;top:408.56px;font:400 16.3px/27px 'Liberation Mono', monospace;color:#d4d4d4;letter-spacing:0px;"><span style="color:#d4d4d4"><span style="color:#d4d4d4">",</span></span></div>
<div class="t" style="left:130.50px;top:435.56px;font:400 16.3px/27px 'Liberation Mono', monospace;color:#d4d4d4;letter-spacing:0px;"><span style="color:#d4d4d4">          <span style="color:#b6caa3">foreground</span><span style="color:#d4d4d4">: "</span></span></div>
<div class="r" style="left:359px;top:436px;width:316.5px;height:23.5px;background:#773433;border-radius:5px;box-sizing:border-box;"></div>
<div class="t" style="left:361.50px;top:435.56px;font:400 16.3px/27px 'Liberation Mono', monospace;color:#d4d4d4;letter-spacing:0px;"><span style="color:#d4d4d4"><span style="color:#dcdcaa">hsl</span><span style="color:#d4d4d4">(</span><span style="color:#569cd6">var</span><span style="color:#e6e6e6">(--secondary-foreground))</span></span></div>
<div class="t" style="left:130.50px;top:459.56px;font:400 16.3px/27px 'Liberation Mono', monospace;color:#d4d4d4;letter-spacing:0px;"><span style="color:#d4d4d4"><span style="color:#d4d4d4">",</span></span></div>
<div class="t" style="left:786.00px;top:408.56px;font:400 16.3px/27px 'Liberation Mono', monospace;color:#d4d4d4;letter-spacing:0px;"><span style="color:#d4d4d4">          <span style="color:#b6caa3">DEFAULT</span><span style="color:#d4d4d4">: "</span></span></div>
<div class="r" style="left:985px;top:409px;width:73.5px;height:23.5px;background:#2b5532;border-radius:5px;box-sizing:border-box;"></div>
<div class="t" style="left:987.50px;top:408.56px;font:400 16.3px/27px 'Liberation Mono', monospace;color:#d4d4d4;letter-spacing:0px;"><span style="color:#d4d4d4"><span style="color:#e6e6e6">#f3d064</span></span></div>
<div class="t" style="left:1060.00px;top:408.56px;font:400 16.3px/27px 'Liberation Mono', monospace;color:#d4d4d4;letter-spacing:0px;"><span style="color:#d4d4d4"><span style="color:#d4d4d4">",</span></span></div>
<div class="t" style="left:786.00px;top:435.56px;font:400 16.3px/27px 'Liberation Mono', monospace;color:#d4d4d4;letter-spacing:0px;"><span style="color:#d4d4d4">          <span style="color:#b6caa3">foreground</span><span style="color:#d4d4d4">: "</span></span></div>
<div class="r" style="left:1014px;top:436px;width:73.5px;height:23.5px;background:#2b5532;border-radius:5px;box-sizing:border-box;"></div>
<div class="t" style="left:1016.50px;top:435.56px;font:400 16.3px/27px 'Liberation Mono', monospace;color:#d4d4d4;letter-spacing:0px;"><span style="color:#d4d4d4"><span style="color:#e6e6e6">#1A1F2C</span></span></div>
<div class="t" style="left:1089.00px;top:435.56px;font:400 16.3px/27px 'Liberation Mono', monospace;color:#d4d4d4;letter-spacing:0px;"><span style="color:#d4d4d4"><span style="color:#d4d4d4">",</span></span></div>
<div class="r" style="left:23px;top:485px;width:68px;height:27px;background:#1b1b1e;border-radius:0px;box-sizing:border-box;"></div>
<div class="r" style="left:91px;top:485px;width:587px;height:27px;background:#111113;border-radius:0px;box-sizing:border-box;"></div>
<div class="t" style="left:58.04px;top:486.56px;font:400 16.3px/27px 'Liberation Mono', monospace;color:#d4d4d4;letter-spacing:0px;"><span style="color:#4c4d5f">34</span></div>
<div class="t" style="left:128.00px;top:486.56px;font:400 16.3px/27px 'Liberation Mono', monospace;color:#d4d4d4;letter-spacing:0px;">        <span style="color:#d4d4d4">}</span><span style="color:#d4d4d4">,</span></div>
<div class="r" style="left:678px;top:485px;width:68px;height:27px;background:#1b1b1e;border-radius:0px;box-sizing:border-box;"></div>
<div class="r" style="left:746px;top:485px;width:575px;height:27px;background:#111113;border-radius:0px;box-sizing:border-box;"></div>
<div class="t" style="left:713.04px;top:486.56px;font:400 16.3px/27px 'Liberation Mono', monospace;color:#d4d4d4;letter-spacing:0px;"><span style="color:#4c4d5f">34</span></div>
<div class="t" style="left:783.50px;top:486.56px;font:400 16.3px/27px 'Liberation Mono', monospace;color:#d4d4d4;letter-spacing:0px;">        <span style="color:#d4d4d4">}</span><span style="color:#d4d4d4">,</span></div>
<div class="r" style="left:23px;top:512px;width:68px;height:27px;background:#1b1b1e;border-radius:0px;box-sizing:border-box;"></div>
<div class="r" style="left:91px;top:512px;width:587px;height:27px;background:#111113;border-radius:0px;box-sizing:border-box;"></div>
<div class="t" style="left:58.04px;top:513.56px;font:400 16.3px/27px 'Liberation Mono', monospace;color:#d4d4d4;letter-spacing:0px;"><span style="color:#4c4d5f">35</span></div>
<div class="t" style="left:128.00px;top:513.56px;font:400 16.3px/27px 'Liberation Mono', monospace;color:#d4d4d4;letter-spacing:0px;">        <span style="color:#b6caa3">destructive</span><span style="color:#d4d4d4">:</span> <span style="color:#d4d4d4">{</span></div>
<div class="r" style="left:678px;top:512px;width:68px;height:27px;background:#1b1b1e;border-radius:0px;box-sizing:border-box;"></div>
<div class="r" style="left:746px;top:512px;width:575px;height:27px;background:#111113;border-radius:0px;box-sizing:border-box;"></div>
<div class="t" style="left:713.04px;top:513.56px;font:400 16.3px/27px 'Liberation Mono', monospace;color:#d4d4d4;letter-spacing:0px;"><span style="color:#4c4d5f">35</span></div>
<div class="t" style="left:783.50px;top:513.56px;font:400 16.3px/27px 'Liberation Mono', monospace;color:#d4d4d4;letter-spacing:0px;">        <span style="color:#b6caa3">destructive</span><span style="color:#d4d4d4">:</span> <span style="color:#d4d4d4">{</span></div>
<div class="r" style="left:23px;top:539px;width:68px;height:27px;background:#1b1b1e;border-radius:0px;box-sizing:border-box;"></div>
<div class="r" style="left:91px;top:539px;width:587px;height:27px;background:#111113;border-radius:0px;box-sizing:border-box;"></div>
<div class="t" style="left:58.04px;top:540.56px;font:400 16.3px/27px 'Liberation Mono', monospace;color:#d4d4d4;letter-spacing:0px;"><span style="color:#4c4d5f">36</span></div>
<div class="t" style="left:128.00px;top:540.56px;font:400 16.3px/27px 'Liberation Mono', monospace;color:#d4d4d4;letter-spacing:0px;">          <span style="color:#b6caa3">DEFAULT</span><span style="color:#d4d4d4">:</span> <span style="color:#ce9178">"hsl(var(--destructive))"</span><span style="color:#d4d4d4">,</span></div>
<div class="r" style="left:678px;top:539px;width:68px;height:27px;background:#1b1b1e;border-radius:0px;box-sizing:border-box;"></div>
<div class="r" style="left:746px;top:539px;width:575px;height:27px;background:#111113;border-radius:0px;box-sizing:border-box;"></div>
<div class="t" style="left:713.04px;top:540.56px;font:400 16.3px/27px 'Liberation Mono', monospace;color:#d4d4d4;letter-spacing:0px;"><span style="color:#4c4d5f">36</span></div>
<div class="t" style="left:783.50px;top:540.56px;font:400 16.3px/27px 'Liberation Mono', monospace;color:#d4d4d4;letter-spacing:0px;">          <span style="color:#b6caa3">DEFAULT</span><span style="color:#d4d4d4">:</span> <span style="color:#ce9178">"hsl(var(--destructive))"</span><span style="color:#d4d4d4">,</span></div>
<div class="r" style="left:23px;top:566.5px;width:68px;height:54.5px;background:#27416f;border-radius:0px;box-sizing:border-box;"></div>
<div class="r" style="left:91px;top:566.5px;width:1230px;height:54.5px;background:#151c2c;border-radius:0px;box-sizing:border-box;"></div>
<div class="t" style="left:128.00px;top:581.16px;font:700 16.3px/27px 'Liberation Mono', monospace;color:#f2f2f2;letter-spacing:0px;text-decoration:underline;text-underline-offset:2.5px;text-decoration-thickness:1.2px;">Expand 16 lines ...</div>
<div class="r" style="left:23px;top:621px;width:68px;height:27px;background:#1b1b1e;border-radius:0px;box-sizing:border-box;"></div>
<div class="r" style="left:91px;top:621px;width:587px;height:27px;background:#111113;border-radius:0px;box-sizing:border-box;"></div>
<div class="t" style="left:58.04px;top:622.56px;font:400 16.3px/27px 'Liberation Mono', monospace;color:#d4d4d4;letter-spacing:0px;"><span style="color:#4c4d5f">53</span></div>
<div class="t" style="left:128.00px;top:622.56px;font:400 16.3px/27px 'Liberation Mono', monospace;color:#d4d4d4;letter-spacing:0px;">          <span style="color:#b6caa3">foreground</span><span style="color:#d4d4d4">:</span> <span style="color:#ce9178">"hsl(var(--card-foreground))"</span><span style="color:#d4d4d4">,</span></div>
<div class="r" style="left:678px;top:621px;width:68px;height:27px;background:#1b1b1e;border-radius:0px;box-sizing:border-box;"></div>
<div class="r" style="left:746px;top:621px;width:575px;height:27px;background:#111113;border-radius:0px;box-sizing:border-box;"></div>
<div class="t" style="left:713.04px;top:622.56px;font:400 16.3px/27px 'Liberation Mono', monospace;color:#d4d4d4;letter-spacing:0px;"><span style="color:#4c4d5f">53</span></div>
<div class="t" style="left:783.50px;top:622.56px;font:400 16.3px/27px 'Liberation Mono', monospace;color:#d4d4d4;letter-spacing:0px;">          <span style="color:#b6caa3">foreground</span><span style="color:#d4d4d4">:</span> <span style="color:#ce9178">"hsl(var(--card-foreground))"</span><span style="color:#d4d4d4">,</span></div>
<div class="r" style="left:23px;top:648px;width:68px;height:27px;background:#1b1b1e;border-radius:0px;box-sizing:border-box;"></div>
<div class="r" style="left:91px;top:648px;width:587px;height:27px;background:#111113;border-radius:0px;box-sizing:border-box;"></div>
<div class="t" style="left:58.04px;top:649.56px;font:400 16.3px/27px 'Liberation Mono', monospace;color:#d4d4d4;letter-spacing:0px;"><span style="color:#4c4d5f">54</span></div>
<div class="t" style="left:128.00px;top:649.56px;font:400 16.3px/27px 'Liberation Mono', monospace;color:#d4d4d4;letter-spacing:0px;">        <span style="color:#d4d4d4">}</span><span style="color:#d4d4d4">,</span></div>
<div class="r" style="left:678px;top:648px;width:68px;height:27px;background:#1b1b1e;border-radius:0px;box-sizing:border-box;"></div>
<div class="r" style="left:746px;top:648px;width:575px;height:27px;background:#111113;border-radius:0px;box-sizing:border-box;"></div>
<div class="t" style="left:713.04px;top:649.56px;font:400 16.3px/27px 'Liberation Mono', monospace;color:#d4d4d4;letter-spacing:0px;"><span style="color:#4c4d5f">54</span></div>
<div class="t" style="left:783.50px;top:649.56px;font:400 16.3px/27px 'Liberation Mono', monospace;color:#d4d4d4;letter-spacing:0px;">        <span style="color:#d4d4d4">}</span><span style="color:#d4d4d4">,</span></div>
<div class="r" style="left:23px;top:675px;width:68px;height:27px;background:#1b1b1e;border-radius:0px;box-sizing:border-box;"></div>
<div class="r" style="left:91px;top:675px;width:587px;height:27px;background:#111113;border-radius:0px;box-sizing:border-box;"></div>
<div class="t" style="left:58.04px;top:676.56px;font:400 16.3px/27px 'Liberation Mono', monospace;color:#d4d4d4;letter-spacing:0px;"><span style="color:#4c4d5f">55</span></div>
<div class="t" style="left:128.00px;top:676.56px;font:400 16.3px/27px 'Liberation Mono', monospace;color:#d4d4d4;letter-spacing:0px;">      <span style="color:#d4d4d4">}</span><span style="color:#d4d4d4">,</span></div>
<div class="r" style="left:678px;top:675px;width:68px;height:27px;background:#1b1b1e;border-radius:0px;box-sizing:border-box;"></div>
<div class="r" style="left:746px;top:675px;width:575px;height:27px;background:#111113;border-radius:0px;box-sizing:border-box;"></div>
<div class="t" style="left:713.04px;top:676.56px;font:400 16.3px/27px 'Liberation Mono', monospace;color:#d4d4d4;letter-spacing:0px;"><span style="color:#4c4d5f">55</span></div>
<div class="t" style="left:783.50px;top:676.56px;font:400 16.3px/27px 'Liberation Mono', monospace;color:#d4d4d4;letter-spacing:0px;">      <span style="color:#d4d4d4">}</span><span style="color:#d4d4d4">,</span></div>
<div class="r" style="left:23px;top:702px;width:68px;height:27px;background:#512828;border-radius:0px;box-sizing:border-box;"></div>
<div class="r" style="left:91px;top:702px;width:587px;height:27px;background:#2e1b1f;border-radius:0px;box-sizing:border-box;"></div>
<div class="t" style="left:58.04px;top:703.56px;font:400 16.3px/27px 'Liberation Mono', monospace;color:#d4d4d4;letter-spacing:0px;"><span style="color:#b39e9e">56</span></div>
<div class="t" style="left:104.00px;top:702.36px;font:400 16.3px/27px 'Liberation Mono', monospace;color:#d4d4d4;letter-spacing:0px;"><span style="color:#e8e8e8;font-family:'Liberation Sans'">−</span></div>
<div class="r" style="left:678px;top:702px;width:68px;height:27px;background:#24472c;border-radius:0px;box-sizing:border-box;"></div>
<div class="r" style="left:746px;top:702px;width:575px;height:27px;background:#16241c;border-radius:0px;box-sizing:border-box;"></div>
<div class="t" style="left:713.04px;top:703.56px;font:400 16.3px/27px 'Liberation Mono', monospace;color:#d4d4d4;letter-spacing:0px;"><span style="color:#94b09a">56</span></div>
<div class="t" style="left:759.80px;top:702.36px;font:400 16.3px/27px 'Liberation Mono', monospace;color:#d4d4d4;letter-spacing:0px;"><span style="color:#e8e8e8;font-family:'Liberation Sans'">+</span></div>
<div class="r" style="left:23px;top:729px;width:68px;height:27px;background:#512828;border-radius:0px;box-sizing:border-box;"></div>
<div class="r" style="left:91px;top:729px;width:587px;height:27px;background:#2e1b1f;border-radius:0px;box-sizing:border-box;"></div>
<div class="t" style="left:58.04px;top:730.56px;font:400 16.3px/27px 'Liberation Mono', monospace;color:#d4d4d4;letter-spacing:0px;"><span style="color:#b39e9e">57</span></div>
<div class="t" style="left:104.00px;top:729.36px;font:400 16.3px/27px 'Liberation Mono', monospace;color:#d4d4d4;letter-spacing:0px;"><span style="color:#e8e8e8;font-family:'Liberation Sans'">−</span></div>
<div class="r" style="left:678px;top:729px;width:68px;height:27px;background:#24472c;border-radius:0px;box-sizing:border-box;"></div>
<div class="r" style="left:746px;top:729px;width:575px;height:27px;background:#16241c;border-radius:0px;box-sizing:border-box;"></div>
<div class="t" style="left:713.04px;top:730.56px;font:400 16.3px/27px 'Liberation Mono', monospace;color:#d4d4d4;letter-spacing:0px;"><span style="color:#94b09a">57</span></div>
<div class="t" style="left:759.80px;top:729.36px;font:400 16.3px/27px 'Liberation Mono', monospace;color:#d4d4d4;letter-spacing:0px;"><span style="color:#e8e8e8;font-family:'Liberation Sans'">+</span></div>
<div class="r" style="left:23px;top:756px;width:68px;height:27px;background:#512828;border-radius:0px;box-sizing:border-box;"></div>
<div class="r" style="left:91px;top:756px;width:587px;height:27px;background:#2e1b1f;border-radius:0px;box-sizing:border-box;"></div>
<div class="t" style="left:58.04px;top:757.56px;font:400 16.3px/27px 'Liberation Mono', monospace;color:#d4d4d4;letter-spacing:0px;"><span style="color:#b39e9e">58</span></div>
<div class="t" style="left:104.00px;top:756.36px;font:400 16.3px/27px 'Liberation Mono', monospace;color:#d4d4d4;letter-spacing:0px;"><span style="color:#e8e8e8;font-family:'Liberation Sans'">−</span></div>
<div class="r" style="left:678px;top:756px;width:68px;height:27px;background:#24472c;border-radius:0px;box-sizing:border-box;"></div>
<div class="r" style="left:746px;top:756px;width:575px;height:27px;background:#16241c;border-radius:0px;box-sizing:border-box;"></div>
<div class="t" style="left:713.04px;top:757.56px;font:400 16.3px/27px 'Liberation Mono', monospace;color:#d4d4d4;letter-spacing:0px;"><span style="color:#94b09a">58</span></div>
<div class="t" style="left:759.80px;top:756.36px;font:400 16.3px/27px 'Liberation Mono', monospace;color:#d4d4d4;letter-spacing:0px;"><span style="color:#e8e8e8;font-family:'Liberation Sans'">+</span></div>
<div class="r" style="left:192.79999999999995px;top:704px;width:122.20000000000005px;height:23.5px;background:#773433;border-radius:5px;box-sizing:border-box;"></div>
<div class="t" style="left:195.00px;top:703.56px;font:400 16.3px/27px 'Liberation Mono', monospace;color:#d4d4d4;letter-spacing:0px;"><span style="color:#d4d4d4"><span style="color:#e6e6e6">borderRadius</span></span></div>
<div class="t" style="left:316.50px;top:703.56px;font:400 16.3px/27px 'Liberation Mono', monospace;color:#d4d4d4;letter-spacing:0px;"><span style="color:#d4d4d4"><span style="color:#d4d4d4">: {</span></span></div>
<div class="r" style="left:212.39999999999998px;top:731px;width:24.399999999999977px;height:23.5px;background:#773433;border-radius:5px;box-sizing:border-box;"></div>
<div class="t" style="left:215.00px;top:730.56px;font:400 16.3px/27px 'Liberation Mono', monospace;color:#d4d4d4;letter-spacing:0px;"><span style="color:#d4d4d4"><span style="color:#e6e6e6">lg</span></span></div>
<div class="t" style="left:239.00px;top:730.56px;font:400 16.3px/27px 'Liberation Mono', monospace;color:#d4d4d4;letter-spacing:0px;"><span style="color:#d4d4d4"><span style="color:#d4d4d4">:</span></span></div>
<div class="t" style="left:263.50px;top:730.56px;font:400 16.3px/27px 'Liberation Mono', monospace;color:#d4d4d4;letter-spacing:0px;"><span style="color:#d4d4d4"><span style="color:#d4d4d4">"</span></span></div>
<div class="r" style="left:277px;top:731px;width:132.5px;height:23.5px;background:#773433;border-radius:5px;box-sizing:border-box;"></div>
<div class="t" style="left:279.50px;top:730.56px;font:400 16.3px/27px 'Liberation Mono', monospace;color:#d4d4d4;letter-spacing:0px;"><span style="color:#d4d4d4"><span style="color:#569cd6">var</span><span style="color:#e6e6e6">(--radius)</span></span></div>
<div class="t" style="left:411.50px;top:730.56px;font:400 16.3px/27px 'Liberation Mono', monospace;color:#d4d4d4;letter-spacing:0px;"><span style="color:#d4d4d4"><span style="color:#d4d4d4">",</span></span></div>
<div class="r" style="left:212.39999999999998px;top:758px;width:24.399999999999977px;height:23.5px;background:#773433;border-radius:5px;box-sizing:border-box;"></div>
<div class="t" style="left:215.00px;top:757.56px;font:400 16.3px/27px 'Liberation Mono', monospace;color:#d4d4d4;letter-spacing:0px;"><span style="color:#d4d4d4"><span style="color:#e6e6e6">md</span></span></div>
<div class="t" style="left:239.00px;top:757.56px;font:400 16.3px/27px 'Liberation Mono', monospace;color:#d4d4d4;letter-spacing:0px;"><span style="color:#d4d4d4"><span style="color:#d4d4d4">:</span></span></div>
<div class="t" style="left:263.50px;top:757.56px;font:400 16.3px/27px 'Liberation Mono', monospace;color:#d4d4d4;letter-spacing:0px;"><span style="color:#d4d4d4"><span style="color:#d4d4d4">"</span></span></div>
<div class="r" style="left:277px;top:758px;width:181px;height:23.5px;background:#773433;border-radius:5px;box-sizing:border-box;"></div>
<div class="t" style="left:279.50px;top:757.56px;font:400 16.3px/27px 'Liberation Mono', monospace;color:#d4d4d4;letter-spacing:0px;"><span style="color:#d4d4d4"><span style="color:#dcdcaa">calc</span><span style="color:#d4d4d4">(</span><span style="color:#569cd6">var</span><span style="color:#e6e6e6">(--radius)</span></span></div>
<div class="t" style="left:475.50px;top:757.56px;font:400 16.3px/27px 'Liberation Mono', monospace;color:#d4d4d4;letter-spacing:0px;"><span style="color:#d4d4d4"><span style="color:#e6e6e6">−</span></span></div>
<div class="r" style="left:489px;top:758px;width:54px;height:23.5px;background:#773433;border-radius:5px;box-sizing:border-box;"></div>
<div class="t" style="left:491.50px;top:757.56px;font:400 16.3px/27px 'Liberation Mono', monospace;color:#d4d4d4;letter-spacing:0px;"><span style="color:#d4d4d4"><span style="color:#e6e6e6"> 2px)</span></span></div>
<div class="t" style="left:545.00px;top:757.56px;font:400 16.3px/27px 'Liberation Mono', monospace;color:#d4d4d4;letter-spacing:0px;"><span style="color:#d4d4d4"><span style="color:#d4d4d4">" ,</span></span></div>
<div class="r" style="left:848.5px;top:704px;width:102.0px;height:23.5px;background:#2b5532;border-radius:5px;box-sizing:border-box;"></div>
<div class="t" style="left:851.00px;top:703.56px;font:400 16.3px/27px 'Liberation Mono', monospace;color:#d4d4d4;letter-spacing:0px;"><span style="color:#d4d4d4"><span style="color:#e6e6e6">fontFamily</span></span></div>
<div class="t" style="left:952.50px;top:703.56px;font:400 16.3px/27px 'Liberation Mono', monospace;color:#d4d4d4;letter-spacing:0px;"><span style="color:#d4d4d4"><span style="color:#d4d4d4">: {</span></span></div>
<div class="r" style="left:868px;top:731px;width:82.5px;height:23.5px;background:#2b5532;border-radius:5px;box-sizing:border-box;"></div>
<div class="t" style="left:870.50px;top:730.56px;font:400 16.3px/27px 'Liberation Mono', monospace;color:#d4d4d4;letter-spacing:0px;"><span style="color:#d4d4d4"><span style="color:#e6e6e6">playfair</span></span></div>
<div class="t" style="left:954.00px;top:730.56px;font:400 16.3px/27px 'Liberation Mono', monospace;color:#d4d4d4;letter-spacing:0px;"><span style="color:#d4d4d4"><span style="color:#d4d4d4">:</span></span></div>
<div class="r" style="left:976.5px;top:731px;width:14.0px;height:23.5px;background:#2b5532;border-radius:5px;box-sizing:border-box;"></div>
<div class="t" style="left:979.00px;top:730.56px;font:400 16.3px/27px 'Liberation Mono', monospace;color:#d4d4d4;letter-spacing:0px;"><span style="color:#d4d4d4"><span style="color:#d4d4d4">[</span></span></div>
<div class="t" style="left:991.50px;top:730.56px;font:400 16.3px/27px 'Liberation Mono', monospace;color:#d4d4d4;letter-spacing:0px;"><span style="color:#d4d4d4"><span style="color:#d4d4d4">"</span></span></div>
<div class="r" style="left:1006.5px;top:731px;width:161.5px;height:23.5px;background:#2b5532;border-radius:5px;box-sizing:border-box;"></div>
<div class="t" style="left:1009.00px;top:730.56px;font:400 16.3px/27px 'Liberation Mono', monospace;color:#d4d4d4;letter-spacing:0px;"><span style="color:#d4d4d4"><span style="color:#e6e6e6">Playfair Display</span></span></div>
<div class="t" style="left:1169.50px;top:730.56px;font:400 16.3px/27px 'Liberation Mono', monospace;color:#d4d4d4;letter-spacing:0px;"><span style="color:#d4d4d4"><span style="color:#d4d4d4">",</span></span></div>
<div class="r" style="left:1193px;top:731px;width:103.5px;height:23.5px;background:#2b5532;border-radius:5px;box-sizing:border-box;"></div>
<div class="t" style="left:1195.50px;top:730.56px;font:400 16.3px/27px 'Liberation Mono', monospace;color:#d4d4d4;letter-spacing:0px;"><span style="color:#d4d4d4"><span style="color:#ce9178"> "serif"</span><span style="color:#d4d4d4">],</span></span></div>
<div class="r" style="left:868px;top:758px;width:54px;height:23.5px;background:#2b5532;border-radius:5px;box-sizing:border-box;"></div>
<div class="t" style="left:870.50px;top:757.56px;font:400 16.3px/27px 'Liberation Mono', monospace;color:#d4d4d4;letter-spacing:0px;"><span style="color:#d4d4d4"><span style="color:#e6e6e6">inter</span></span></div>
<div class="t" style="left:924.50px;top:757.56px;font:400 16.3px/27px 'Liberation Mono', monospace;color:#d4d4d4;letter-spacing:0px;"><span style="color:#d4d4d4"><span style="color:#d4d4d4">:</span></span></div>
<div class="r" style="left:947.5px;top:758px;width:14.5px;height:23.5px;background:#2b5532;border-radius:5px;box-sizing:border-box;"></div>
<div class="t" style="left:950.00px;top:757.56px;font:400 16.3px/27px 'Liberation Mono', monospace;color:#d4d4d4;letter-spacing:0px;"><span style="color:#d4d4d4"><span style="color:#d4d4d4">[</span></span></div>
<div class="t" style="left:964.00px;top:757.56px;font:400 16.3px/27px 'Liberation Mono', monospace;color:#d4d4d4;letter-spacing:0px;"><span style="color:#d4d4d4"><span style="color:#d4d4d4">"</span></span></div>
<div class="r" style="left:977px;top:758px;width:73.5px;height:23.5px;background:#2b5532;border-radius:5px;box-sizing:border-box;"></div>
<div class="t" style="left:979.50px;top:757.56px;font:400 16.3px/27px 'Liberation Mono', monospace;color:#d4d4d4;letter-spacing:0px;"><span style="color:#d4d4d4"><span style="color:#e6e6e6">Inter",</span></span></div>
<div class="r" style="left:1066.5px;top:758px;width:54.0px;height:23.5px;background:#2b5532;border-radius:5px;box-sizing:border-box;"></div>
<div class="t" style="left:1069.00px;top:757.56px;font:400 16.3px/27px 'Liberation Mono', monospace;color:#d4d4d4;letter-spacing:0px;"><span style="color:#d4d4d4"><span style="color:#e6e6e6">"sans</span></span></div>
<div class="t" style="left:1123.50px;top:757.56px;font:400 16.3px/27px 'Liberation Mono', monospace;color:#d4d4d4;letter-spacing:0px;"><span style="color:#d4d4d4"><span style="color:#e6e6e6">−</span></span></div>
<div class="r" style="left:1135.5px;top:758px;width:54.5px;height:23.5px;background:#2b5532;border-radius:5px;box-sizing:border-box;"></div>
<div class="t" style="left:1138.00px;top:757.56px;font:400 16.3px/27px 'Liberation Mono', monospace;color:#d4d4d4;letter-spacing:0px;"><span style="color:#d4d4d4"><span style="color:#e6e6e6">serif</span></span></div>
<div class="t" style="left:1191.00px;top:757.56px;font:400 16.3px/27px 'Liberation Mono', monospace;color:#d4d4d4;letter-spacing:0px;"><span style="color:#d4d4d4"><span style="color:#d4d4d4">"</span></span></div>
<div class="r" style="left:1205.5px;top:758px;width:14.0px;height:23.5px;background:#2b5532;border-radius:5px;box-sizing:border-box;"></div>
<div class="t" style="left:1208.00px;top:757.56px;font:400 16.3px/27px 'Liberation Mono', monospace;color:#d4d4d4;letter-spacing:0px;"><span style="color:#d4d4d4"><span style="color:#d4d4d4">]</span></span></div>
<div class="t" style="left:1221.00px;top:757.56px;font:400 16.3px/27px 'Liberation Mono', monospace;color:#d4d4d4;letter-spacing:0px;"><span style="color:#d4d4d4"><span style="color:#d4d4d4">,</span></span></div>
<div class="r" style="left:23px;top:783px;width:68px;height:27px;background:#512828;border-radius:0px;box-sizing:border-box;"></div>
<div class="r" style="left:91px;top:783px;width:587px;height:27px;background:#2e1b1f;border-radius:0px;box-sizing:border-box;"></div>
<div class="t" style="left:58.04px;top:784.56px;font:400 16.3px/27px 'Liberation Mono', monospace;color:#d4d4d4;letter-spacing:0px;"><span style="color:#b39e9e">59</span></div>
<div class="t" style="left:104.00px;top:783.36px;font:400 16.3px/27px 'Liberation Mono', monospace;color:#d4d4d4;letter-spacing:0px;"><span style="color:#e8e8e8;font-family:'Liberation Sans'">−</span></div>
<div class="t" style="left:128.00px;top:784.56px;font:400 16.3px/27px 'Liberation Mono', monospace;color:#d4d4d4;letter-spacing:0px;"><span style="color:#d4d4d4">        <span style="color:#b6caa3">sm</span><span style="color:#d4d4d4">:</span> <span style="color:#ce9178">"calc(var(--radius) - 4px)"</span><span style="color:#d4d4d4">,</span></span></div>
<div class="r" style="left:678px;top:783px;width:68px;height:27px;background:#1b1b1e;border-radius:0px;box-sizing:border-box;"></div>
<div class="r" style="left:746px;top:783px;width:575px;height:27px;background:#111113;border-radius:0px;box-sizing:border-box;"></div>
<div class="r" style="left:23px;top:810px;width:68px;height:27px;background:#1b1b1e;border-radius:0px;box-sizing:border-box;"></div>
<div class="r" style="left:91px;top:810px;width:587px;height:27px;background:#111113;border-radius:0px;box-sizing:border-box;"></div>
<div class="t" style="left:58.04px;top:811.56px;font:400 16.3px/27px 'Liberation Mono', monospace;color:#d4d4d4;letter-spacing:0px;"><span style="color:#4c4d5f">60</span></div>
<div class="t" style="left:128.00px;top:811.56px;font:400 16.3px/27px 'Liberation Mono', monospace;color:#d4d4d4;letter-spacing:0px;">      <span style="color:#d4d4d4">}</span><span style="color:#d4d4d4">,</span></div>
<div class="r" style="left:678px;top:810px;width:68px;height:27px;background:#1b1b1e;border-radius:0px;box-sizing:border-box;"></div>
<div class="r" style="left:746px;top:810px;width:575px;height:27px;background:#111113;border-radius:0px;box-sizing:border-box;"></div>
<div class="t" style="left:713.04px;top:811.56px;font:400 16.3px/27px 'Liberation Mono', monospace;color:#d4d4d4;letter-spacing:0px;"><span style="color:#4c4d5f">59</span></div>
<div class="t" style="left:783.50px;top:811.56px;font:400 16.3px/27px 'Liberation Mono', monospace;color:#d4d4d4;letter-spacing:0px;">      <span style="color:#d4d4d4">}</span><span style="color:#d4d4d4">,</span></div>
<div class="r" style="left:23px;top:837px;width:68px;height:27px;background:#1b1b1e;border-radius:0px;box-sizing:border-box;"></div>
<div class="r" style="left:91px;top:837px;width:587px;height:27px;background:#111113;border-radius:0px;box-sizing:border-box;"></div>
<div class="t" style="left:58.04px;top:838.56px;font:400 16.3px/27px 'Liberation Mono', monospace;color:#d4d4d4;letter-spacing:0px;"><span style="color:#4c4d5f">61</span></div>
<div class="t" style="left:128.00px;top:838.56px;font:400 16.3px/27px 'Liberation Mono', monospace;color:#d4d4d4;letter-spacing:0px;">      <span style="color:#b6caa3">keyframes</span><span style="color:#d4d4d4">:</span> <span style="color:#d4d4d4">{</span></div>
<div class="r" style="left:678px;top:837px;width:68px;height:27px;background:#1b1b1e;border-radius:0px;box-sizing:border-box;"></div>
<div class="r" style="left:746px;top:837px;width:575px;height:27px;background:#111113;border-radius:0px;box-sizing:border-box;"></div>
<div class="t" style="left:713.04px;top:838.56px;font:400 16.3px/27px 'Liberation Mono', monospace;color:#d4d4d4;letter-spacing:0px;"><span style="color:#4c4d5f">60</span></div>
<div class="t" style="left:783.50px;top:838.56px;font:400 16.3px/27px 'Liberation Mono', monospace;color:#d4d4d4;letter-spacing:0px;">      <span style="color:#b6caa3">keyframes</span><span style="color:#d4d4d4">:</span> <span style="color:#d4d4d4">{</span></div>
<div class="r" style="left:23px;top:864px;width:68px;height:27px;background:#512828;border-radius:0px;box-sizing:border-box;"></div>
<div class="r" style="left:91px;top:864px;width:587px;height:27px;background:#2e1b1f;border-radius:0px;box-sizing:border-box;"></div>
<div class="t" style="left:58.04px;top:865.56px;font:400 16.3px/27px 'Liberation Mono', monospace;color:#d4d4d4;letter-spacing:0px;"><span style="color:#b39e9e">62</span></div>
<div class="t" style="left:104.00px;top:864.36px;font:400 16.3px/27px 'Liberation Mono', monospace;color:#d4d4d4;letter-spacing:0px;"><span style="color:#e8e8e8;font-family:'Liberation Sans'">−</span></div>
<div class="r" style="left:678px;top:864px;width:68px;height:27px;background:#24472c;border-radius:0px;box-sizing:border-box;"></div>
<div class="r" style="left:746px;top:864px;width:575px;height:27px;background:#16241c;border-radius:0px;box-sizing:border-box;"></div>
<div class="t" style="left:713.04px;top:865.56px;font:400 16.3px/27px 'Liberation Mono', monospace;color:#d4d4d4;letter-spacing:0px;"><span style="color:#94b09a">61</span></div>
<div class="t" style="left:759.80px;top:864.36px;font:400 16.3px/27px 'Liberation Mono', monospace;color:#d4d4d4;letter-spacing:0px;"><span style="color:#e8e8e8;font-family:'Liberation Sans'">+</span></div>
<div class="t" style="left:207.50px;top:865.56px;font:400 16.3px/27px 'Liberation Mono', monospace;color:#d4d4d4;letter-spacing:0px;"><span style="color:#d4d4d4"><span style="color:#d4d4d4">"</span></span></div>
<div class="r" style="left:222px;top:866px;width:92.5px;height:23.5px;background:#773433;border-radius:5px;box-sizing:border-box;"></div>
<div class="t" style="left:224.50px;top:865.56px;font:400 16.3px/27px 'Liberation Mono', monospace;color:#d4d4d4;letter-spacing:0px;"><span style="color:#d4d4d4"><span style="color:#e6e6e6">accordion</span></span></div>
<div class="t" style="left:317.50px;top:865.56px;font:400 16.3px/27px 'Liberation Mono', monospace;color:#d4d4d4;letter-spacing:0px;"><span style="color:#d4d4d4"><span style="color:#e6e6e6">−</span></span></div>
<div class="r" style="left:330.29999999999995px;top:866px;width:44.700000000000045px;height:23.5px;background:#773433;border-radius:5px;box-sizing:border-box;"></div>
<div class="t" style="left:332.80px;top:865.56px;font:400 16.3px/27px 'Liberation Mono', monospace;color:#d4d4d4;letter-spacing:0px;"><span style="color:#d4d4d4"><span style="color:#e6e6e6">down</span></span></div>
<div class="t" style="left:375.50px;top:865.56px;font:400 16.3px/27px 'Liberation Mono', monospace;color:#d4d4d4;letter-spacing:0px;"><span style="color:#d4d4d4"><span style="color:#d4d4d4">": {</span></span></div>
<div class="t" style="left:863.50px;top:865.56px;font:400 16.3px/27px 'Liberation Mono', monospace;color:#d4d4d4;letter-spacing:0px;"><span style="color:#d4d4d4"><span style="color:#d4d4d4">"</span></span></div>
<div class="r" style="left:877.5px;top:866px;width:44.5px;height:23.5px;background:#2b5532;border-radius:5px;box-sizing:border-box;"></div>
<div class="t" style="left:880.00px;top:865.56px;font:400 16.3px/27px 'Liberation Mono', monospace;color:#d4d4d4;letter-spacing:0px;"><span style="color:#d4d4d4"><span style="color:#e6e6e6">fade</span></span></div>
<div class="t" style="left:925.00px;top:865.56px;font:400 16.3px/27px 'Liberation Mono', monospace;color:#d4d4d4;letter-spacing:0px;"><span style="color:#d4d4d4"><span style="color:#e6e6e6">−</span></span></div>
<div class="r" style="left:937px;top:866px;width:25px;height:23.5px;background:#2b5532;border-radius:5px;box-sizing:border-box;"></div>
<div class="t" style="left:939.50px;top:865.56px;font:400 16.3px/27px 'Liberation Mono', monospace;color:#d4d4d4;letter-spacing:0px;"><span style="color:#d4d4d4"><span style="color:#569cd6">in</span></span></div>
<div class="t" style="left:963.00px;top:865.56px;font:400 16.3px/27px 'Liberation Mono', monospace;color:#d4d4d4;letter-spacing:0px;"><span style="color:#d4d4d4"><span style="color:#d4d4d4">": {</span></span></div>
<div class="r" style="left:23px;top:891px;width:68px;height:51px;background:#512828;border-radius:0px;box-sizing:border-box;"></div>
<div class="r" style="left:91px;top:891px;width:587px;height:51px;background:#2e1b1f;border-radius:0px;box-sizing:border-box;"></div>
<div class="t" style="left:58.04px;top:892.56px;font:400 16.3px/27px 'Liberation Mono', monospace;color:#d4d4d4;letter-spacing:0px;"><span style="color:#b39e9e">63</span></div>
<div class="t" style="left:104.00px;top:891.36px;font:400 16.3px/27px 'Liberation Mono', monospace;color:#d4d4d4;letter-spacing:0px;"><span style="color:#e8e8e8;font-family:'Liberation Sans'">−</span></div>
<div class="r" style="left:678px;top:891px;width:68px;height:51px;background:#24472c;border-radius:0px;box-sizing:border-box;"></div>
<div class="r" style="left:746px;top:891px;width:575px;height:51px;background:#16241c;border-radius:0px;box-sizing:border-box;"></div>
<div class="t" style="left:713.04px;top:892.56px;font:400 16.3px/27px 'Liberation Mono', monospace;color:#d4d4d4;letter-spacing:0px;"><span style="color:#94b09a">62</span></div>
<div class="t" style="left:759.80px;top:891.36px;font:400 16.3px/27px 'Liberation Mono', monospace;color:#d4d4d4;letter-spacing:0px;"><span style="color:#e8e8e8;font-family:'Liberation Sans'">+</span></div>
<div class="r" style="left:231.5px;top:893px;width:44.5px;height:23.5px;background:#773433;border-radius:5px;box-sizing:border-box;"></div>
<div class="t" style="left:234.00px;top:892.56px;font:400 16.3px/27px 'Liberation Mono', monospace;color:#d4d4d4;letter-spacing:0px;"><span style="color:#d4d4d4"><span style="color:#569cd6">from</span></span></div>
<div class="t" style="left:277.50px;top:892.56px;font:400 16.3px/27px 'Liberation Mono', monospace;color:#d4d4d4;letter-spacing:0px;"><span style="color:#d4d4d4"><span style="color:#d4d4d4">:</span></span></div>
<div class="t" style="left:296.00px;top:892.56px;font:400 16.3px/27px 'Liberation Mono', monospace;color:#d4d4d4;letter-spacing:0px;"><span style="color:#d4d4d4"><span style="color:#d4d4d4">{</span></span></div>
<div class="r" style="left:320px;top:893px;width:64.5px;height:23.5px;background:#773433;border-radius:5px;box-sizing:border-box;"></div>
<div class="t" style="left:322.50px;top:892.56px;font:400 16.3px/27px 'Liberation Mono', monospace;color:#d4d4d4;letter-spacing:0px;"><span style="color:#d4d4d4"><span style="color:#e6e6e6">height</span></span></div>
<div class="t" style="left:386.00px;top:892.56px;font:400 16.3px/27px 'Liberation Mono', monospace;color:#d4d4d4;letter-spacing:0px;"><span style="color:#d4d4d4"><span style="color:#d4d4d4">:</span></span></div>
<div class="t" style="left:404.00px;top:892.56px;font:400 16.3px/27px 'Liberation Mono', monospace;color:#d4d4d4;letter-spacing:0px;"><span style="color:#d4d4d4"><span style="color:#ce9178">"0"</span></span></div>
<div class="t" style="left:446.00px;top:892.56px;font:400 16.3px/27px 'Liberation Mono', monospace;color:#d4d4d4;letter-spacing:0px;"><span style="color:#d4d4d4"><span style="color:#d4d4d4"> },</span></span></div>
<div class="r" style="left:887px;top:893px;width:44px;height:23.5px;background:#2b5532;border-radius:5px;box-sizing:border-box;"></div>
<div class="t" style="left:889.50px;top:892.56px;font:400 16.3px/27px 'Liberation Mono', monospace;color:#d4d4d4;letter-spacing:0px;"><span style="color:#d4d4d4"><span style="color:#ce9178">"0%"</span></span></div>
<div class="t" style="left:933.00px;top:892.56px;font:400 16.3px/27px 'Liberation Mono', monospace;color:#d4d4d4;letter-spacing:0px;"><span style="color:#d4d4d4"><span style="color:#d4d4d4">:</span></span></div>
<div class="t" style="left:952.50px;top:892.56px;font:400 16.3px/27px 'Liberation Mono', monospace;color:#d4d4d4;letter-spacing:0px;"><span style="color:#d4d4d4"><span style="color:#d4d4d4">{</span></span></div>
<div class="r" style="left:976px;top:893px;width:73.5px;height:23.5px;background:#2b5532;border-radius:5px;box-sizing:border-box;"></div>
<div class="t" style="left:978.50px;top:892.56px;font:400 16.3px/27px 'Liberation Mono', monospace;color:#d4d4d4;letter-spacing:0px;"><span style="color:#d4d4d4"><span style="color:#e6e6e6">opacity</span></span></div>
<div class="t" style="left:1051.50px;top:892.56px;font:400 16.3px/27px 'Liberation Mono', monospace;color:#d4d4d4;letter-spacing:0px;"><span style="color:#d4d4d4"><span style="color:#d4d4d4">:</span></span></div>
<div class="t" style="left:1069.00px;top:892.56px;font:400 16.3px/27px 'Liberation Mono', monospace;color:#d4d4d4;letter-spacing:0px;"><span style="color:#d4d4d4"><span style="color:#ce9178">"0"</span></span></div>
<div class="r" style="left:1104.5px;top:893px;width:14.0px;height:23.5px;background:#2b5532;border-radius:5px;box-sizing:border-box;"></div>
<div class="t" style="left:1107.00px;top:892.56px;font:400 16.3px/27px 'Liberation Mono', monospace;color:#d4d4d4;letter-spacing:0px;"><span style="color:#d4d4d4"><span style="color:#d4d4d4">,</span></span></div>
<div class="r" style="left:784px;top:919px;width:298px;height:23.5px;background:#2b5532;border-radius:5px;box-sizing:border-box;"></div>
<div class="t" style="left:786.50px;top:916.56px;font:400 16.3px/27px 'Liberation Mono', monospace;color:#d4d4d4;letter-spacing:0px;"><span style="color:#d4d4d4"><span style="color:#b6caa3">transform</span><span style="color:#d4d4d4">: </span><span style="color:#ce9178">"translateY(10px)"</span></span></div>
<div class="t" style="left:1084.00px;top:916.56px;font:400 16.3px/27px 'Liberation Mono', monospace;color:#d4d4d4;letter-spacing:0px;"><span style="color:#d4d4d4"><span style="color:#d4d4d4">},</span></span></div>
</div>
</body></html>
